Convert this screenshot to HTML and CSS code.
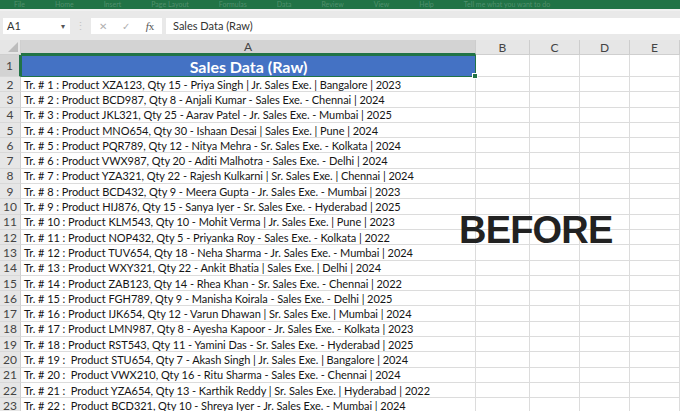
FILE: index.html
```html
<!DOCTYPE html>
<html lang="en">
<head>
    <meta charset="UTF-8">
    <title>Sales Data (Raw)</title>
    <link rel="stylesheet" href="styles.css">
</head>
<body>

    <div class="menubar">
        <span>File</span><span>Home</span><span>Insert</span><span>Page Layout</span><span>Formulas</span>
        <span>Data</span><span>Review</span><span>View</span><span>Help</span><span>Tell me what you want to do</span>
    </div>

    <div class="formulabar">
        <div class="namebox"><span>A1</span><span class="arrow">&#9662;</span></div>
        <div class="dots">&#8942;</div>
        <div class="fbuttons"><span>&#10005;</span><span>&#10003;</span><span class="fx"><i>f</i>x</span></div>
        <div class="finput">Sales Data (Raw)</div>
    </div>

    <div class="sheet">
        <div class="corner"></div>
        <div class="ch sel">A</div><div class="ch">B</div><div class="ch">C</div><div class="ch">D</div><div class="ch">E</div>

        <div class="rh sel">1</div>
        <div class="cell title">Sales Data (Raw)<span class="handle"></span></div><div class="cell"></div><div class="cell"></div><div class="cell"></div><div class="cell"></div>

        <div class="rh">2</div><div class="cell">Tr. # 1 : Product XZA123, Qty 15 - Priya Singh | Jr. Sales Exe. | Bangalore | 2023</div><div class="cell"></div><div class="cell"></div><div class="cell"></div><div class="cell"></div>
        <div class="rh">3</div><div class="cell">Tr. # 2 : Product BCD987, Qty 8 - Anjali Kumar - Sales Exe. - Chennai | 2024</div><div class="cell"></div><div class="cell"></div><div class="cell"></div><div class="cell"></div>
        <div class="rh">4</div><div class="cell">Tr. # 3 : Product JKL321, Qty 25 - Aarav Patel - Jr. Sales Exe. - Mumbai | 2025</div><div class="cell"></div><div class="cell"></div><div class="cell"></div><div class="cell"></div>
        <div class="rh">5</div><div class="cell">Tr. # 4 : Product MNO654, Qty 30 - Ishaan Desai | Sales Exe. | Pune | 2024</div><div class="cell"></div><div class="cell"></div><div class="cell"></div><div class="cell"></div>
        <div class="rh">6</div><div class="cell">Tr. # 5 : Product PQR789, Qty 12 - Nitya Mehra - Sr. Sales Exe. - Kolkata | 2024</div><div class="cell"></div><div class="cell"></div><div class="cell"></div><div class="cell"></div>
        <div class="rh">7</div><div class="cell">Tr. # 6 : Product VWX987, Qty 20 - Aditi Malhotra - Sales Exe. - Delhi | 2024</div><div class="cell"></div><div class="cell"></div><div class="cell"></div><div class="cell"></div>
        <div class="rh">8</div><div class="cell">Tr. # 7 : Product YZA321, Qty 22 - Rajesh Kulkarni | Sr. Sales Exe. | Chennai | 2024</div><div class="cell"></div><div class="cell"></div><div class="cell"></div><div class="cell"></div>
        <div class="rh">9</div><div class="cell">Tr. # 8 : Product BCD432, Qty 9 - Meera Gupta - Jr. Sales Exe. - Mumbai | 2023</div><div class="cell"></div><div class="cell"></div><div class="cell"></div><div class="cell"></div>
        <div class="rh">10</div><div class="cell">Tr. # 9 : Product HIJ876, Qty 15 - Sanya Iyer - Sr. Sales Exe. - Hyderabad | 2025</div><div class="cell"></div><div class="cell"></div><div class="cell"></div><div class="cell"></div>
        <div class="rh">11</div><div class="cell">Tr. # 10 : Product KLM543, Qty 10 - Mohit Verma | Jr. Sales Exe. | Pune | 2023</div><div class="cell"></div><div class="cell"></div><div class="cell"></div><div class="cell"></div>
        <div class="rh">12</div><div class="cell">Tr. # 11 : Product NOP432, Qty 5 - Priyanka Roy - Sales Exe. - Kolkata | 2022</div><div class="cell"></div><div class="cell"></div><div class="cell"></div><div class="cell"></div>
        <div class="rh">13</div><div class="cell">Tr. # 12 : Product TUV654, Qty 18 - Neha Sharma - Jr. Sales Exe. - Mumbai | 2024</div><div class="cell"></div><div class="cell"></div><div class="cell"></div><div class="cell"></div>
        <div class="rh">14</div><div class="cell">Tr. # 13 : Product WXY321, Qty 22 - Ankit Bhatia | Sales Exe. | Delhi | 2024</div><div class="cell"></div><div class="cell"></div><div class="cell"></div><div class="cell"></div>
        <div class="rh">15</div><div class="cell">Tr. # 14 : Product ZAB123, Qty 14 - Rhea Khan - Sr. Sales Exe. - Chennai | 2022</div><div class="cell"></div><div class="cell"></div><div class="cell"></div><div class="cell"></div>
        <div class="rh">16</div><div class="cell">Tr. # 15 : Product FGH789, Qty 9 - Manisha Koirala - Sales Exe. - Delhi | 2025</div><div class="cell"></div><div class="cell"></div><div class="cell"></div><div class="cell"></div>
        <div class="rh">17</div><div class="cell">Tr. # 16 : Product IJK654, Qty 12 - Varun Dhawan | Sr. Sales Exe. | Mumbai | 2024</div><div class="cell"></div><div class="cell"></div><div class="cell"></div><div class="cell"></div>
        <div class="rh">18</div><div class="cell">Tr. # 17 : Product LMN987, Qty 8 - Ayesha Kapoor - Jr. Sales Exe. - Kolkata | 2023</div><div class="cell"></div><div class="cell"></div><div class="cell"></div><div class="cell"></div>
        <div class="rh">19</div><div class="cell">Tr. # 18 : Product RST543, Qty 11 - Yamini Das - Sr. Sales Exe. - Hyderabad | 2025</div><div class="cell"></div><div class="cell"></div><div class="cell"></div><div class="cell"></div>
        <div class="rh">20</div><div class="cell">Tr. # 19 : &nbsp;Product STU654, Qty 7 - Akash Singh | Jr. Sales Exe. | Bangalore | 2024</div><div class="cell"></div><div class="cell"></div><div class="cell"></div><div class="cell"></div>
        <div class="rh">21</div><div class="cell">Tr. # 20 : &nbsp;Product VWX210, Qty 16 - Ritu Sharma - Sales Exe. - Chennai | 2024</div><div class="cell"></div><div class="cell"></div><div class="cell"></div><div class="cell"></div>
        <div class="rh">22</div><div class="cell">Tr. # 21 : &nbsp;Product YZA654, Qty 13 - Karthik Reddy | Sr. Sales Exe. | Hyderabad | 2022</div><div class="cell"></div><div class="cell"></div><div class="cell"></div><div class="cell"></div>
        <div class="rh">23</div><div class="cell">Tr. # 22 : &nbsp;Product BCD321, Qty 10 - Shreya Iyer - Jr. Sales Exe. - Mumbai | 2024</div><div class="cell"></div><div class="cell"></div><div class="cell"></div><div class="cell"></div>

        <div class="before">BEFORE</div>
    </div>

</body>
</html>
```

FILE: styles.css
```css
body {
    margin: 0;
    background: #fff;
    font-family: Lato, "Open Sans", sans-serif;
    color: #1b1b1b;
    overflow: hidden;
}

.menubar {
    height: 9px;
    background: #217346;
    overflow: hidden;
    display: flex;
    align-items: center;
    gap: 30px;
    padding-left: 14px;
    border-bottom: 2px solid #f0f0f0;
}
.menubar span {
    font-size: 7px;
    line-height: 9px;
    color: rgba(255, 255, 255, 0.22);
    white-space: nowrap;
}

.formulabar {
    height: 29px;
    background: #e9e9e9;
    display: flex;
    align-items: center;
    padding-left: 3px;
    box-sizing: border-box;
}
.namebox {
    width: 67px;
    height: 16px;
    background: #fff;
    display: flex;
    align-items: center;
    justify-content: space-between;
    padding: 0 5px 0 4px;
    box-sizing: border-box;
    font-size: 11px;
    color: #333;
}
.namebox .arrow {
    font-size: 8px;
    color: #555;
}
.dots {
    width: 21px;
    text-align: center;
    color: #c4c4c4;
    font-size: 11px;
}
.fbuttons {
    width: 71px;
    height: 16px;
    background: #fff;
    display: flex;
    align-items: center;
    justify-content: space-around;
    font-size: 10px;
    color: #b0b0b0;
}
.fbuttons .fx {
    color: #555;
    font-family: "Liberation Serif", serif;
    font-size: 11px;
}
.finput {
    flex: 1;
    height: 16px;
    margin-left: 4px;
    background: #fff;
    font-size: 11px;
    line-height: 16px;
    padding-left: 7px;
    color: #333;
}

.sheet {
    position: relative;
    display: grid;
    grid-template-columns: 21px 455px 54px 50px 50px 1fr;
    grid-template-rows: 15px 22px;
    grid-auto-rows: 15.3px;
}

.corner, .ch, .rh {
    background: #e6e6e6;
    color: #444;
    box-sizing: border-box;
}
.corner {
    position: relative;
    border-right: 1px solid #cfcfcf;
    border-bottom: 1px solid #cfcfcf;
}
.corner::after {
    content: "";
    position: absolute;
    right: 2px;
    bottom: 2px;
    border-left: 10px solid transparent;
    border-bottom: 10px solid #bcbcbc;
}
.ch {
    font-size: 12px;
    text-align: center;
    line-height: 15px;
    border-right: 1px solid #cdcdcd;
    border-bottom: 1px solid #cfcfcf;
}
.ch.sel {
    background: #d3d3d3;
    border-bottom: 2px solid #217346;
    line-height: 14px;
}
.rh {
    font-size: 12px;
    text-align: center;
    border-right: 1px solid #cfcfcf;
    border-bottom: 1px solid #d8d8d8;
    display: flex;
    align-items: center;
    justify-content: center;
}
.rh.sel {
    background: #d3d3d3;
    border-right: 2px solid #217346;
}

.cell {
    border-right: 1px solid #dcdcdc;
    border-bottom: 1px solid #dcdcdc;
    box-sizing: border-box;
    font-size: 11px;
    letter-spacing: -0.05px;
    white-space: nowrap;
    padding-left: 3px;
    display: flex;
    align-items: center;
    color: #151515;
}
.cell.title {
    position: relative;
    background: #4472c4;
    border: 1px solid #217346;
    justify-content: center;
    color: #fff;
    font-weight: bold;
    font-size: 16px;
    letter-spacing: 0;
    padding-left: 0;
}
.handle {
    position: absolute;
    right: -3px;
    bottom: -3px;
    width: 4px;
    height: 4px;
    background: #217346;
    border: 1px solid #fff;
}

.before {
    position: absolute;
    left: 459px;
    top: 171px;
    font-family: "Liberation Sans", Arial, sans-serif;
    font-weight: bold;
    font-size: 38px;
    line-height: 1;
    letter-spacing: -0.8px;
    color: #222;
}
```
